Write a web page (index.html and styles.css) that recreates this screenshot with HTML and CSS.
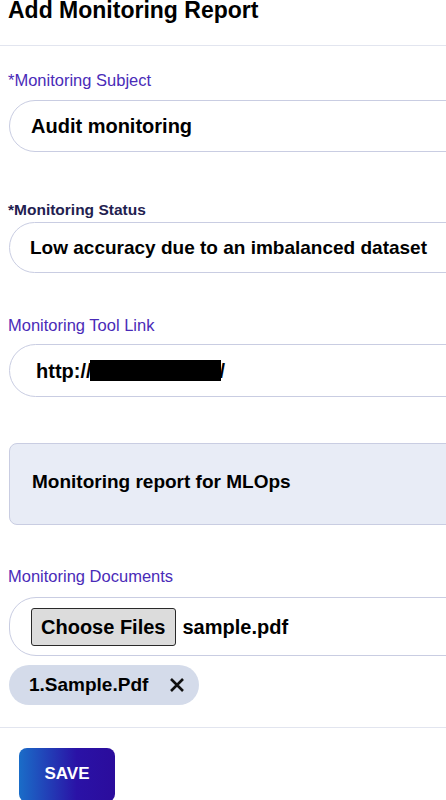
FILE: index.html
```html
<!DOCTYPE html>
<html lang="en">
<head>
<meta charset="utf-8">
<title>Add Monitoring Report</title>
<link rel="stylesheet" href="styles.css">
</head>
<body>
<div class="page">
  <header class="header">
    <h1 class="title">Add Monitoring Report</h1>
  </header>
  <form class="form">
    <div class="field field-subject">
      <label class="label">*Monitoring Subject</label>
      <div class="input input-subject"><span class="value v20">Audit monitoring</span></div>
    </div>
    <div class="field field-status">
      <label class="label label-dark">*Monitoring Status</label>
      <div class="input input-status"><span class="value v19">Low accuracy due to an imbalanced dataset</span></div>
    </div>
    <div class="field field-link">
      <label class="label">Monitoring Tool Link</label>
      <div class="input input-link"><span class="value v20 link-value">http://<span class="redact"></span>/</span></div>
    </div>
    <div class="field field-desc">
      <div class="textarea"><span class="value v19">Monitoring report for MLOps</span></div>
    </div>
    <div class="field field-docs">
      <label class="label">Monitoring Documents</label>
      <div class="input input-file">
        <span class="file-btn">Choose Files</span>
        <span class="file-name">sample.pdf</span>
      </div>
      <div class="chips">
        <span class="chip">1.Sample.Pdf
          <svg class="chip-x" width="16" height="16" viewBox="0 0 16 16" aria-hidden="true"><path d="M2 2 L14 14 M14 2 L2 14" stroke="#111" stroke-width="2.6" stroke-linecap="butt" fill="none"/></svg>
        </span>
      </div>
    </div>
  </form>
  <div class="footer">
    <button type="button" class="save">SAVE</button>
  </div>
</div>
</body>
</html>
```

FILE: styles.css
```css
html, body {
  margin: 0;
  padding: 0;
  background: #ffffff;
  overflow: hidden;
}
body {
  font-family: "Liberation Sans", Arial, sans-serif;
  color: #000;
}
.page {
  width: 446px;
  height: 800px;
  overflow: hidden;
}
.header {
  display: flow-root;
  height: 46px;
  box-sizing: border-box;
  border-bottom: 1px solid #e2e5ef;
  padding-left: 8px;
}
.title {
  margin: 0;
  font-size: 23px;
  line-height: 20px;
  font-weight: 700;
  color: #000;
}
.form {
  padding-left: 8px;
}
.field {
  display: flex;
  flex-direction: column;
}
.label {
  font-size: 16.5px;
  line-height: 18px;
  color: #4a2bb8;
  height: 18px;
}
.label-dark {
  font-size: 15.5px;
  font-weight: 700;
  color: #1f2150;
}
.input {
  margin-left: 1px;
  width: 520px;
  border: 1px solid #c9cde2;
  border-radius: 27px;
  background: #fff;
  box-sizing: border-box;
  display: flex;
  align-items: center;
}
.value {
  font-weight: 700;
  white-space: nowrap;
}
.v20 { font-size: 20px; line-height: 22px; }
.v19 { font-size: 19px; line-height: 22px; }

.field-subject { margin-top: 25px; }
.field-subject .label { margin-bottom: 11px; }
.input-subject { height: 52px; padding-left: 21px; }

.field-status { margin-top: 49px; }
.field-status .label { margin-bottom: 3px; }
.input-status { height: 51px; padding-left: 20px; }

.field-link { margin-top: 43px; }
.field-link .label { margin-bottom: 10px; }
.input-link { height: 53px; padding-left: 26px; }
.link-value { display: flex; align-items: center; }
.redact {
  display: inline-block;
  width: 131px;
  height: 21px;
  background: #000;
  margin-left: -2px;
  margin-right: -1px;
}

.field-desc { margin-top: 46px; }
.textarea {
  margin-left: 1px;
  width: 520px;
  height: 82px;
  box-sizing: border-box;
  border: 1px solid #c9cde2;
  border-radius: 8px;
  background: #e8ecf6;
  padding: 27px 0 0 22px;
}

.field-docs { margin-top: 42px; }
.field-docs .label { margin-bottom: 12px; }
.input-file { height: 59px; padding-left: 21px; gap: 6px; }
.file-btn {
  font-size: 20px;
  font-weight: 700;
  line-height: 22px;
  height: 38px;
  box-sizing: border-box;
  padding: 7px 10px 0 9px;
  background: #dcdcdc;
  border: 1px solid #2a2a2a;
  border-radius: 3px;
}
.file-name {
  font-size: 20px;
  font-weight: 700;
  line-height: 22px;
}
.chips {
  margin-top: 9px;
  display: flex;
}
.chip {
  margin-left: 1px;
  height: 40px;
  border-radius: 20px;
  background: #d4dbea;
  display: flex;
  align-items: center;
  padding: 0 14px 0 20px;
  font-size: 19px;
  font-weight: 700;
  gap: 21px;
}
.chip-x { display: block; }

.footer {
  margin-top: 22px;
  border-top: 1px solid #e2e5ef;
  padding: 20px 0 0 19px;
}
.save {
  width: 96px;
  height: 54px;
  border: none;
  border-radius: 8px;
  background: linear-gradient(90deg, #1a6dc8 0%, #2a12a6 60%, #2b0c9c 100%);
  color: #fff;
  font-family: "Liberation Sans", Arial, sans-serif;
  font-size: 17px;
  font-weight: 700;
  padding: 0 0 2px 0;
}
```
